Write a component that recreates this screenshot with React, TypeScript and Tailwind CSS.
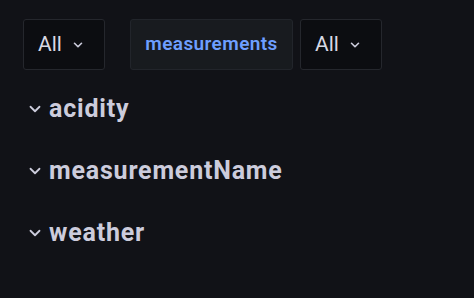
import { ChevronDown } from "lucide-react";

const groups = ["acidity", "measurementName", "weather"];

function Picker() {
  return (
    <div className="flex h-[51px] w-[82px] items-center gap-[9px] rounded-[3px] border border-[#25272d] bg-[#0c0d11] pl-[14px]">
      <span className="text-[21px] text-[#d8d9e4]">All</span>
      <ChevronDown className="h-[14px] w-[14px] text-[#ccccdc]" strokeWidth={2.8} />
    </div>
  );
}

export default function App() {
  return (
    <div className="h-[298px] w-[474px] bg-[#111217] pl-[23px] pt-[19px] font-['Roboto',sans-serif]">
      <div className="flex items-center">
        <Picker />
        <div className="ml-[25px] mr-[7px] flex h-[51px] w-[163px] items-center justify-center rounded-[3px] border border-[#22252b] bg-[#181b1f] text-[19px] font-semibold tracking-[0.4px] text-[#6e9fff]">
          measurements
        </div>
        <Picker />
      </div>
      <div className="mt-[27px] flex flex-col gap-[38px] pl-[3px]">
        {groups.map((g) => (
          <div key={g} className="flex h-[24px] items-center gap-[5px]">
            <ChevronDown className="h-[18px] w-[18px] text-[#ccccdc]" strokeWidth={2.4} />
            <span className="text-[25px] font-bold tracking-[0.8px] text-[#ccccdc]">{g}</span>
          </div>
        ))}
      </div>
    </div>
  );
}
